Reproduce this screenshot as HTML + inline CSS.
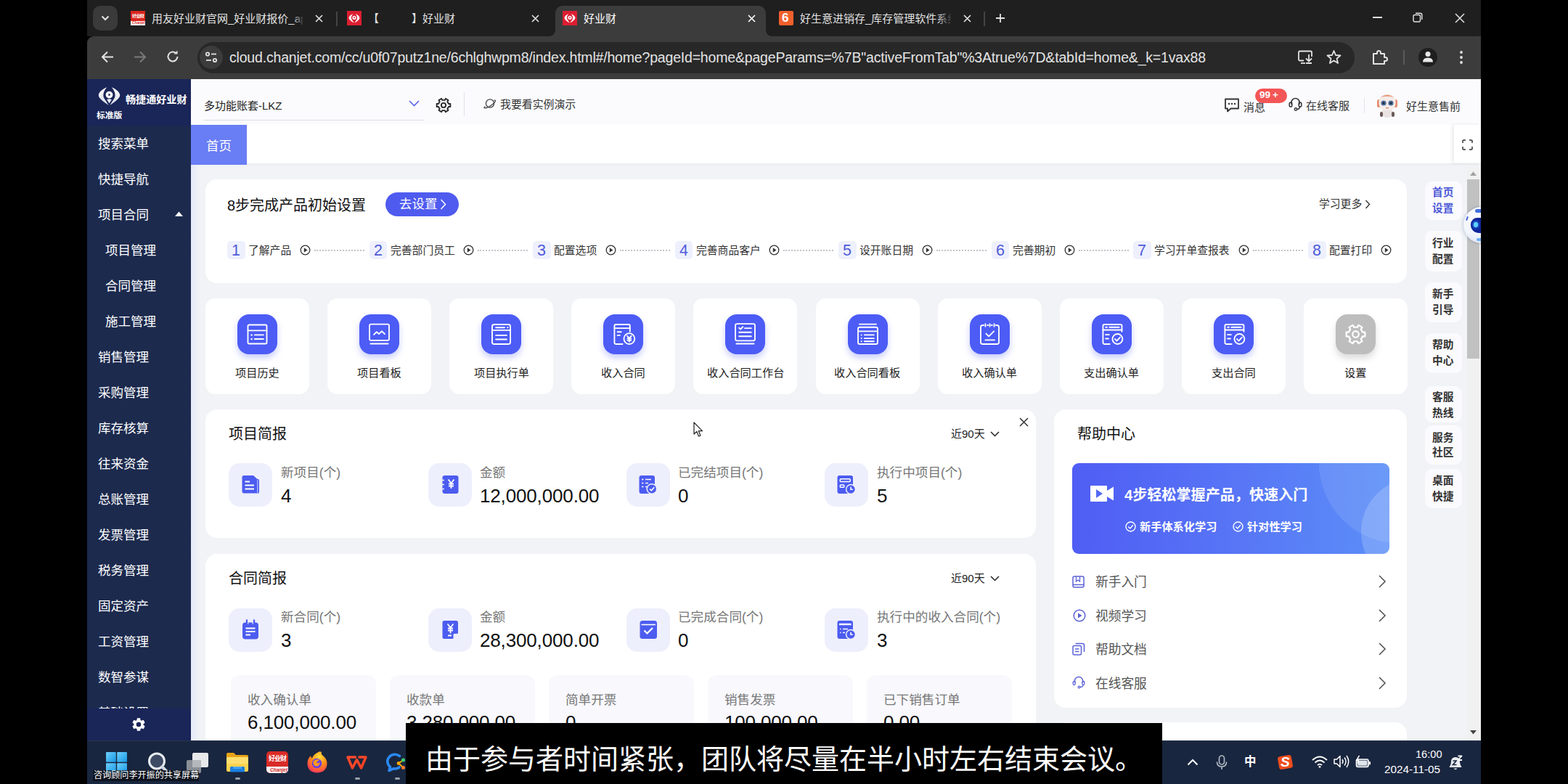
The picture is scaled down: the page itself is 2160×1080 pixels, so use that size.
<!DOCTYPE html>
<html lang="zh">
<head>
<meta charset="utf-8">
<title>screen</title>
<style>
*{box-sizing:border-box;margin:0;padding:0}
html,body{width:2160px;height:1080px;overflow:hidden;background:#000}
body{font-family:"Liberation Sans",sans-serif;position:relative;color:#222}
.a{position:absolute;white-space:nowrap}
.t{position:absolute;white-space:nowrap;line-height:1.4;transform:translateY(-50%)}
svg{position:absolute;overflow:visible}
.g{font-family:"Liberation Sans","Noto Sans CJK SC",sans-serif;white-space:pre}
.b{font-weight:bold}
/* chrome */
#tabbar{left:120px;top:0;width:1920px;height:50px;background:#1f1f1f}
#addr{left:120px;top:50px;width:1920px;height:59px;background:#3c3c3c;border-radius:9px 0 0 0}
#pill{left:272px;top:58px;width:1594px;height:43px;border-radius:22px;background:#282828}
#atab{left:765px;top:8px;width:290px;height:42px;background:#3c3c3c;border-radius:10px 10px 0 0}
.tabt{color:#e3e3e3;font-size:15px}
/* app */
#app{left:120px;top:109px;width:1920px;height:911px;background:linear-gradient(90deg,#e4e9f8 143px,#f1f3f6 155px);overflow:hidden}
#side{left:120px;top:109px;width:143px;height:911px;background:#1c2a4e;overflow:hidden}
.mi{color:#fff;font-size:17.5px;left:15px;margin-top:1.5px}
.ms{color:#fff;font-size:17.5px;left:25px;margin-top:1.5px}
#hdr{left:263px;top:109px;width:1777px;height:63px;background:#fbfbfe}
#tabs{left:263px;top:172px;width:1777px;height:53px;background:#fff;box-shadow:0 2px 3px rgba(0,0,0,.03)}
.card{position:absolute;background:#fff;border-radius:16px}
.ic{position:absolute;width:55px;height:55px;border-radius:16px;background:#4c5cf5;box-shadow:0 5px 8px rgba(76,92,245,.30)}
.icl{font-size:15.2px;color:#222;transform:translate(-50%,-50%)}
.sb{position:absolute;width:60px;height:60px;border-radius:15px;background:#eeeffc}
.sl{font-size:17.6px;color:#777}
.sv{font-size:26px;color:#111;letter-spacing:-0.15px}
.fn{position:absolute;left:1963px;width:49px;background:#fbfbfe;border-radius:10px;font-size:15px;font-weight:bold;color:#333;text-align:center;line-height:22px}
#task{left:120px;top:1020px;width:1920px;height:60px;background:#19263f;border-top:1.5px solid #28364e}
#sub{left:559px;top:996px;width:1042px;height:84px;background:#000}
</style>
</head>
<body>
<!-- browser chrome -->
<div class="a" id="tabbar"></div>
<div class="a" id="addr"></div>
<div class="a" id="atab"></div>
<div class="a" id="pill"></div>

<!-- tab search btn -->
<div class="a" style="left:128px;top:8px;width:34px;height:34px;border-radius:10px;background:#3a3a3a"></div>
<svg style="left:139px;top:20px" width="12" height="10" viewBox="0 0 12 10"><path d="M1.5 2.5 L6 7 L10.5 2.5" fill="none" stroke="#e3e3e3" stroke-width="2"/></svg>
<!-- tab1 -->
<div class="a" style="left:180px;top:15px;width:20px;height:20px;background:#fff"></div>
<div class="a" style="left:180px;top:15px;width:20px;height:14px;background:#d9251d"></div>
<svg style="left:181.5px;top:17.5px" width="18.8" height="8.4"><text class="g b" x="0" y="6.3" font-size="6" letter-spacing="-0.6" fill="rgb(255, 255, 255)">好业财</text></svg>
<div class="t" style="left:182px;top:32px;font-size:4.800px;font-weight:bold;font-style:italic;color:#d9251d">Chanjet</div>
<svg style="left:209px;top:14.5px;overflow:hidden" width="208" height="21"><text class="g" x="0" y="16" font-size="15" fill="rgb(227, 227, 227)">用友好业财官网_好业财报价_ap</text></svg>
<div class="a" style="left:403px;top:10px;width:16px;height:30px;background:linear-gradient(90deg,rgba(31,31,31,0),#1f1f1f)"></div>
<svg style="left:434px;top:20px" width="11" height="11" viewBox="0 0 11 11"><path d="M1 1 L10 10 M10 1 L1 10" stroke="#e3e3e3" stroke-width="1.6"/></svg>
<div class="a" style="left:463px;top:16px;width:2px;height:20px;background:#444"></div>
<!-- tab2 -->
<div class="a" style="left:478px;top:15px;width:20px;height:20px;background:#dc1e32"></div>
<svg style="left:480px;top:17px" width="16" height="16" viewBox="0 0 16 16"><g transform="translate(0.2,1.5) scale(0.503)"><path d="M12.300 1.200 C5.500 4 .8 8.300 .8 12.200 C.8 16.500 8 21.500 14.600 26 C12.500 22 9.800 18.800 8.300 16 C6.200 12 7.800 6 12.300 1.200 Z" fill="#fff"/><path d="M18.700 1.200 C25.500 4 30.200 8.300 30.200 12.200 C30.200 16.500 23 21.500 16.400 26 C18.500 22 21.200 18.800 22.700 16 C24.800 12 23.200 6 18.700 1.200 Z" fill="#fff"/><circle cx="15.500" cy="11.600" r="5.200" fill="#fff"/><circle cx="15.500" cy="11.600" r="2" fill="#dc1e32"/></g></svg>
<svg style="left:506.5px;top:14.75px" width="17" height="21"><text class="g" x="0" y="15.75" font-size="15" fill="rgb(227, 227, 227)">【</text></svg>
<svg style="left:567px;top:14.75px" width="62" height="21"><text class="g" x="0" y="15.75" font-size="15" fill="rgb(227, 227, 227)">】好业财</text></svg>
<svg style="left:732px;top:20px" width="11" height="11" viewBox="0 0 11 11"><path d="M1 1 L10 10 M10 1 L1 10" stroke="#e3e3e3" stroke-width="1.6"/></svg>
<!-- active tab3 -->
<div class="a" style="left:757px;top:42px;width:8px;height:8px;background:radial-gradient(circle at 0 0,#1f1f1f 7.5px,#3c3c3c 8px)"></div>
<div class="a" style="left:1055px;top:42px;width:8px;height:8px;background:radial-gradient(circle at 100% 0,#1f1f1f 7.5px,#3c3c3c 8px)"></div>
<div class="a" style="left:775px;top:15px;width:20px;height:20px;background:#dc1e32"></div>
<svg style="left:777px;top:17px" width="16" height="16" viewBox="0 0 16 16"><g transform="translate(0.2,1.5) scale(0.503)"><path d="M12.300 1.200 C5.500 4 .8 8.300 .8 12.200 C.8 16.500 8 21.500 14.600 26 C12.500 22 9.800 18.800 8.300 16 C6.200 12 7.800 6 12.300 1.200 Z" fill="#fff"/><path d="M18.700 1.200 C25.500 4 30.200 8.300 30.200 12.200 C30.200 16.500 23 21.500 16.400 26 C18.500 22 21.200 18.800 22.700 16 C24.800 12 23.200 6 18.700 1.200 Z" fill="#fff"/><circle cx="15.500" cy="11.600" r="5.200" fill="#fff"/><circle cx="15.500" cy="11.600" r="2" fill="#dc1e32"/></g></svg>
<svg style="left:804px;top:14.75px" width="47" height="21"><text class="g" x="0" y="15.75" font-size="15" fill="rgb(255, 255, 255)">好业财</text></svg>
<svg style="left:1030px;top:20px" width="11" height="11" viewBox="0 0 11 11"><path d="M1 1 L10 10 M10 1 L1 10" stroke="#fff" stroke-width="1.6"/></svg>
<!-- tab4 -->
<div class="a" style="left:1073px;top:15px;width:20px;height:20px;background:#f2602c;border-radius:2px"></div>
<svg style="left:1077px;top:12.25px" width="11.44" height="23.8"><text class="g b" x="0" y="17.85" font-size="17" fill="rgb(255, 255, 255)">6</text></svg>
<svg style="left:1102px;top:14.5px;overflow:hidden" width="208" height="21"><text class="g" x="0" y="16" font-size="15" fill="rgb(227, 227, 227)">好生意进销存_库存管理软件系统</text></svg>
<div class="a" style="left:1290px;top:10px;width:22px;height:30px;background:linear-gradient(90deg,rgba(31,31,31,0),#1f1f1f)"></div>
<svg style="left:1327px;top:20px" width="11" height="11" viewBox="0 0 11 11"><path d="M1 1 L10 10 M10 1 L1 10" stroke="#e3e3e3" stroke-width="1.6"/></svg>
<div class="a" style="left:1355px;top:16px;width:2px;height:20px;background:#444"></div>
<svg style="left:1371px;top:18px" width="14" height="14" viewBox="0 0 14 14"><path d="M7 1 V13 M1 7 H13" stroke="#e3e3e3" stroke-width="1.8"/></svg>
<!-- window controls -->
<div class="a" style="left:1891px;top:23px;width:13px;height:1.5px;background:#e3e3e3"></div>
<svg style="left:1946px;top:17px" width="14" height="14" viewBox="0 0 14 14"><rect x="1" y="3.5" width="9.5" height="9.5" rx="2" fill="none" stroke="#e3e3e3" stroke-width="1.4"/><path d="M4 1.2 H10.5 Q12.8 1.2 12.8 3.5 V10" fill="none" stroke="#e3e3e3" stroke-width="1.4"/></svg>
<svg style="left:2004px;top:18px" width="14" height="14" viewBox="0 0 14 14"><path d="M1 1 L13 13 M13 1 L1 13" stroke="#e3e3e3" stroke-width="1.5"/></svg>
<!-- nav buttons -->
<svg style="left:139px;top:70px" width="18" height="17" viewBox="0 0 18 17"><path d="M9 1.5 L2 8.5 L9 15.5 M2 8.5 H17" fill="none" stroke="#e3e3e3" stroke-width="2"/></svg>
<svg style="left:184px;top:70px" width="18" height="17" viewBox="0 0 18 17"><path d="M9 1.5 L16 8.5 L9 15.5 M16 8.5 H1" fill="none" stroke="#7a7a7a" stroke-width="2"/></svg>
<svg style="left:229px;top:69px" width="18" height="18" viewBox="0 0 18 18"><path d="M15.5 9 A6.5 6.5 0 1 1 13.6 4.4" fill="none" stroke="#e3e3e3" stroke-width="2"/><path d="M10.5 5.5 H15.5 V0.5 Z" fill="#e3e3e3"/></svg>
<!-- site info icon -->
<div class="a" style="left:275px;top:63px;width:32px;height:32px;border-radius:16px;background:#3c3c3c"></div>
<svg style="left:282px;top:70px" width="18" height="18" viewBox="0 0 18 18"><circle cx="4" cy="4.5" r="2.2" fill="none" stroke="#e3e3e3" stroke-width="1.8"/><path d="M9 4.5 H16" stroke="#e3e3e3" stroke-width="1.8"/><circle cx="14" cy="13" r="2.2" fill="none" stroke="#e3e3e3" stroke-width="1.8"/><path d="M2 13 H9" stroke="#e3e3e3" stroke-width="1.8"/></svg>
<svg id="url" style="left:316px;top:64px" width="1350" height="30" viewBox="0 0 1350 30"><text x="0" y="21.800" font-family="Liberation Sans, sans-serif" font-size="19.500" fill="#e3e3e3" textLength="1345" lengthAdjust="spacing">cloud.chanjet.com/cc/u0f07putz1ne/6chlghwpm8/index.html#/home?pageId=home&amp;pageParams=%7B"activeFromTab"%3Atrue%7D&amp;tabId=home&amp;_k=1vax88</text></svg>
<!-- right icons -->
<svg style="left:1787px;top:69px" width="22" height="20" viewBox="0 0 22 20"><path d="M20 9 V3 Q20 1.5 18.5 1.5 H3.5 Q2 1.5 2 3 V13 Q2 14.5 3.5 14.5 H9" fill="none" stroke="#e3e3e3" stroke-width="1.8"/><path d="M5 18 H11" stroke="#e3e3e3" stroke-width="1.8"/><path d="M16 6 V15 M12 11.5 L16 15.5 L20 11.5 M12 18 H20" fill="none" stroke="#e3e3e3" stroke-width="1.8"/></svg>
<svg style="left:1827px;top:68px" width="21" height="21" viewBox="0 0 21 21"><path d="M10.5 2 L13 8 L19.5 8.5 L14.5 12.7 L16.1 19 L10.5 15.5 L4.9 19 L6.5 12.7 L1.5 8.5 L8 8 Z" fill="none" stroke="#e3e3e3" stroke-width="1.8" stroke-linejoin="round"/></svg>
<svg style="left:1889px;top:67px" width="24" height="24" viewBox="0 0 24 24"><path d="M3 7 H8 V5.5 A2.5 2.5 0 0 1 13 5.5 V7 H18 V12 H19.5 A2.5 2.5 0 0 1 19.5 17 H18 V21 H3 Z" fill="none" stroke="#e3e3e3" stroke-width="2" stroke-linejoin="round"/></svg>
<div class="a" style="left:1933px;top:69px;width:1.5px;height:20px;background:#5a5a5a"></div>
<div class="a" style="left:1954px;top:66px;width:26px;height:26px;border-radius:13px;background:#1f1f1f"></div>
<svg style="left:1959px;top:70px" width="16" height="17" viewBox="0 0 16 17"><circle cx="8" cy="4.5" r="3.5" fill="#e8e8e8"/><path d="M1 15.5 Q1 9.5 8 9.5 Q15 9.5 15 15.5 Z" fill="#e8e8e8"/></svg>
<svg style="left:2010px;top:69px" width="6" height="20" viewBox="0 0 6 20"><circle cx="3" cy="3" r="1.9" fill="#e3e3e3"/><circle cx="3" cy="10" r="1.9" fill="#e3e3e3"/><circle cx="3" cy="17" r="1.9" fill="#e3e3e3"/></svg>
<!-- app -->
<div class="a" id="app"></div>
<div class="a" id="hdr"></div>
<div class="a" id="tabs"></div>
<div class="a" id="side">
<div class="a" style="left:0;top:0;width:143px;height:64px;background:#1a2558"></div>
<svg style="left:15px;top:10px" width="31" height="27" viewBox="0 0 31 27"><defs><linearGradient id="lg" x1="0" y1="0" x2="0" y2="1"><stop offset="0" stop-color="#fff"/><stop offset="1" stop-color="#d5dae6"/></linearGradient></defs><path d="M12.300 1.200 C5.500 4 .8 8.300 .8 12.200 C.8 16.500 8 21.500 14.600 26 C12.500 22 9.800 18.800 8.300 16 C6.200 12 7.800 6 12.300 1.200 Z" fill="url(#lg)"/><path d="M18.700 1.200 C25.500 4 30.200 8.300 30.200 12.200 C30.200 16.500 23 21.500 16.400 26 C18.500 22 21.200 18.800 22.700 16 C24.800 12 23.200 6 18.700 1.200 Z" fill="url(#lg)"/><circle cx="15.500" cy="11.600" r="4.900" fill="#fff"/><circle cx="15.500" cy="11.600" r="1.500" fill="#39446f"/><path d="M12.200 18.200 Q15.500 16.200 18.800 18.200 L15.500 23.500 Z" fill="#e3e7ef"/></svg>
<svg style="left:52.5px;top:17.52px" width="86.6" height="19.74"><text class="g b" x="0" y="14.8" font-size="14.1" fill="rgb(255, 255, 255)">畅捷通好业财</text></svg>
<svg style="left:12.8px;top:41.85px" width="37.4" height="16.52"><text class="g b" x="0" y="12.39" font-size="11.8" fill="rgb(255, 255, 255)">标准版</text></svg>
<svg style="left:15px;top:76.88px" width="72" height="24.5"><text class="g" x="0" y="18.38" font-size="17.5" fill="rgb(255, 255, 255)">搜索菜单</text></svg>
<svg style="left:15px;top:125.88px" width="72" height="24.5"><text class="g" x="0" y="18.38" font-size="17.5" fill="rgb(255, 255, 255)">快捷导航</text></svg>
<svg style="left:15px;top:174.88px" width="72" height="24.5"><text class="g" x="0" y="18.38" font-size="17.5" fill="rgb(255, 255, 255)">项目合同</text></svg>
<svg style="left:25px;top:223.88px" width="72" height="24.5"><text class="g" x="0" y="18.38" font-size="17.5" fill="rgb(255, 255, 255)">项目管理</text></svg>
<svg style="left:25px;top:272.88px" width="72" height="24.5"><text class="g" x="0" y="18.38" font-size="17.5" fill="rgb(255, 255, 255)">合同管理</text></svg>
<svg style="left:25px;top:321.88px" width="72" height="24.5"><text class="g" x="0" y="18.38" font-size="17.5" fill="rgb(255, 255, 255)">施工管理</text></svg>
<svg style="left:15px;top:370.88px" width="72" height="24.5"><text class="g" x="0" y="18.38" font-size="17.5" fill="rgb(255, 255, 255)">销售管理</text></svg>
<svg style="left:15px;top:419.88px" width="72" height="24.5"><text class="g" x="0" y="18.38" font-size="17.5" fill="rgb(255, 255, 255)">采购管理</text></svg>
<svg style="left:15px;top:468.88px" width="72" height="24.5"><text class="g" x="0" y="18.38" font-size="17.5" fill="rgb(255, 255, 255)">库存核算</text></svg>
<svg style="left:15px;top:517.88px" width="72" height="24.5"><text class="g" x="0" y="18.38" font-size="17.5" fill="rgb(255, 255, 255)">往来资金</text></svg>
<svg style="left:15px;top:566.88px" width="72" height="24.5"><text class="g" x="0" y="18.38" font-size="17.5" fill="rgb(255, 255, 255)">总账管理</text></svg>
<svg style="left:15px;top:615.88px" width="72" height="24.5"><text class="g" x="0" y="18.38" font-size="17.5" fill="rgb(255, 255, 255)">发票管理</text></svg>
<svg style="left:15px;top:664.88px" width="72" height="24.5"><text class="g" x="0" y="18.38" font-size="17.5" fill="rgb(255, 255, 255)">税务管理</text></svg>
<svg style="left:15px;top:713.88px" width="72" height="24.5"><text class="g" x="0" y="18.38" font-size="17.5" fill="rgb(255, 255, 255)">固定资产</text></svg>
<svg style="left:15px;top:762.88px" width="72" height="24.5"><text class="g" x="0" y="18.38" font-size="17.5" fill="rgb(255, 255, 255)">工资管理</text></svg>
<svg style="left:15px;top:811.88px" width="72" height="24.5"><text class="g" x="0" y="18.38" font-size="17.5" fill="rgb(255, 255, 255)">数智参谋</text></svg>
<svg style="left:15px;top:860.88px" width="72" height="24.5"><text class="g" x="0" y="18.38" font-size="17.5" fill="rgb(255, 255, 255)">基础设置</text></svg>
<svg style="left:121px;top:182px" width="11" height="7" viewBox="0 0 11 7"><path d="M0 7 L5.5 0.5 L11 7 Z" fill="#fff"/></svg>
<div class="a" style="left:0;top:867px;width:143px;height:44px;background:#1a2558"></div>
<svg style="left:60px;top:878px" width="22" height="22" viewBox="0 0 24 24"><path fill="#fff" d="M19.14 12.94a7.07 7.07 0 0 0 .05-.94 7.07 7.07 0 0 0-.06-.94l2.03-1.58a.49.49 0 0 0 .12-.61l-1.92-3.32a.49.49 0 0 0-.59-.22l-2.39.96a7.03 7.03 0 0 0-1.62-.94l-.36-2.54a.48.48 0 0 0-.48-.41h-3.84a.48.48 0 0 0-.47.41l-.36 2.54a7.4 7.4 0 0 0-1.62.94l-2.39-.96a.48.48 0 0 0-.59.22L2.74 8.87a.47.47 0 0 0 .12.61l2.03 1.58a7.34 7.34 0 0 0 0 1.88l-2.03 1.58a.49.49 0 0 0-.12.61l1.92 3.32c.12.22.37.29.59.22l2.39-.96c.5.38 1.03.7 1.62.94l.36 2.54c.05.24.24.41.48.41h3.84c.24 0 .44-.17.47-.41l.36-2.54a7.03 7.03 0 0 0 1.62-.94l2.39.96c.22.08.47 0 .59-.22l1.92-3.32a.49.49 0 0 0-.12-.61zM12 15.6a3.6 3.6 0 1 1 0-7.2 3.6 3.6 0 0 1 0 7.2z"/></svg>
</div>
<!-- header -->
<svg style="left:281px;top:134.75px" width="109.08" height="21"><text class="g" x="0" y="15.75" font-size="15" fill="rgb(34, 34, 34)">多功能账套-LKZ</text></svg>
<div class="a" style="left:280px;top:164.5px;width:304px;height:1px;background:#dcdce4"></div>
<svg style="left:563px;top:138px" width="15" height="9" viewBox="0 0 15 9"><path d="M1 1 L7.5 7.5 L14 1" fill="none" stroke="#5b63e6" stroke-width="1.6"/></svg>
<svg style="left:600px;top:134px" width="22" height="22" viewBox="0 0 22 22"><path d="M13.81 1.82 L17.55 3.98 L16.28 5.96 L18.00 8.95 L20.35 8.84 L20.35 13.16 L18.00 13.05 L16.28 16.04 L17.55 18.02 L13.81 20.18 L12.72 18.09 L9.28 18.09 L8.19 20.18 L4.45 18.02 L5.72 16.04 L4.00 13.05 L1.65 13.16 L1.65 8.84 L4.00 8.95 L5.72 5.96 L4.45 3.98 L8.19 1.82 L9.28 3.91 L12.72 3.91 Z" fill="none" stroke="#2a2a2a" stroke-width="1.900" stroke-linejoin="round"/><circle cx="11" cy="11" r="3.100" fill="none" stroke="#2a2a2a" stroke-width="1.900"/></svg>
<div class="a" style="left:638.5px;top:127px;width:1px;height:33px;background:#e2e2e8"></div>
<svg style="left:665px;top:135px" width="20" height="16" viewBox="0 0 20 16"><circle cx="10" cy="7.5" r="5.6" fill="none" stroke="#444" stroke-width="1.3"/><path d="M3.5 11.5 Q0 14.5 4 13.8 Q10 12.5 16.5 6 Q19 2.5 15.5 3.2" fill="none" stroke="#444" stroke-width="1.2"/></svg>
<svg style="left:689px;top:133.43px" width="106.3" height="20.86"><text class="g" x="0" y="15.65" font-size="14.9" fill="rgb(51, 51, 51)">我要看实例演示</text></svg>
<!-- header right -->
<svg style="left:1686px;top:134px" width="22" height="22" viewBox="0 0 22 22"><path d="M2 2.5 H20 V15.5 H9.5 L5 19.5 V15.5 H2 Z" fill="none" stroke="#333" stroke-width="1.8" stroke-linejoin="round"/><circle cx="7" cy="9" r="1.2" fill="#333"/><circle cx="11" cy="9" r="1.2" fill="#333"/><circle cx="15" cy="9" r="1.2" fill="#333"/></svg>
<svg style="left:1713px;top:136.75px" width="32" height="21"><text class="g" x="0" y="15.75" font-size="15" fill="rgb(51, 51, 51)">消息</text></svg>
<div class="a" style="left:1729px;top:122px;width:44px;height:20px;border-radius:10px;background:#f35656"></div>
<svg style="left:1735px;top:121.38px" width="27.5" height="18.9"><text class="g b" x="0" y="14.18" font-size="13.5" fill="rgb(255, 255, 255)">99<tspan dx="3">+</tspan></text></svg>
<svg style="left:1775px;top:133px" width="19" height="20" viewBox="0 0 19 20"><path d="M4 11 V8 A5.5 5.5 0 0 1 15 8 V11" fill="none" stroke="#333" stroke-width="1.6"/><rect x="1.2" y="8" width="3.6" height="6" rx="1.8" fill="none" stroke="#333" stroke-width="1.5"/><rect x="14.200" y="8" width="3.600" height="6" rx="1.800" fill="none" stroke="#333" stroke-width="1.500"/><path d="M15.500 14 Q15.500 17.500 11.500 17.500" fill="none" stroke="#333" stroke-width="1.500"/><circle cx="10" cy="17.500" r="1.700" fill="none" stroke="#333" stroke-width="1.400"/></svg>
<svg style="left:1799px;top:134.75px" width="62" height="21"><text class="g" x="0" y="15.75" font-size="15" fill="rgb(51, 51, 51)">在线客服</text></svg>
<div class="a" style="left:1878.5px;top:135px;width:1px;height:21px;background:#e2e2e8"></div>
<!-- robot avatar -->
<svg style="left:1895px;top:128px" width="32" height="34" viewBox="0 0 32 34"><ellipse cx="16" cy="28" rx="9" ry="6" fill="#e9e3e1"/><rect x="6" y="26" width="4" height="7" rx="2" fill="#6b5a58"/><rect x="22" y="26" width="4" height="7" rx="2" fill="#6b5a58"/><rect x="2" y="9" width="5" height="11" rx="2.500" fill="#e58b6c"/><rect x="25" y="9" width="5" height="11" rx="2.500" fill="#e58b6c"/><rect x="4.500" y="2" width="23" height="22" rx="9" fill="#f4ece8"/><path d="M7 6 Q16 -1 25 6 Q16 3.500 7 6Z" fill="#e9977a"/><circle cx="11" cy="14" r="3.600" fill="#4f6f9c"/><circle cx="21" cy="14" r="3.600" fill="#4f6f9c"/><circle cx="11" cy="14" r="1.600" fill="#1c2538"/><circle cx="21" cy="14" r="1.600" fill="#1c2538"/><path d="M14 20.500 Q16 21.500 18 20.500" stroke="#c96d5a" stroke-width="1" fill="none"/></svg>
<svg style="left:1937px;top:135.75px" width="77" height="21"><text class="g" x="0" y="15.75" font-size="15" fill="rgb(51, 51, 51)">好生意售前</text></svg>
<!-- tabs -->
<div class="a" style="left:263px;top:172px;width:77px;height:55px;background:#697df5"></div>
<svg style="left:284px;top:188.88px" width="37" height="24.5"><text class="g" x="0" y="18.38" font-size="17.5" fill="rgb(255, 255, 255)">首页</text></svg>
<div class="a" style="left:2003px;top:172px;width:37px;height:52px;background:#fff;box-shadow:-3px 0 5px rgba(0,0,0,.08)"></div>
<svg style="left:2014px;top:192px" width="15" height="15" viewBox="0 0 15 15"><path d="M1 5 V2 Q1 1 2 1 H5 M10 1 H13 Q14 1 14 2 V5 M14 10 V13 Q14 14 13 14 H10 M5 14 H2 Q1 14 1 13 V10" fill="none" stroke="#333" stroke-width="1.5"/></svg>
<div id="content">
<div class="card" style="left:283px;top:247px;width:1655px;height:143px"></div>
<svg style="left:313px;top:268.5px" width="193.1" height="28"><text class="g" x="0" y="21" font-size="20" fill="rgb(17, 17, 17)">8步完成产品初始设置</text></svg>
<div class="a" style="left:531px;top:265px;width:101px;height:33px;border-radius:17px;background:#4f5bef"></div>
<svg style="left:550px;top:268.88px" width="54.5" height="24.5"><text class="g" x="0" y="18.38" font-size="17.5" fill="rgb(255, 255, 255)">去设置</text></svg>
<svg style="left:606px;top:274px" width="9" height="15" viewBox="0 0 9 15"><path d="M1.5 1 L7.5 7.5 L1.5 14" fill="none" stroke="#fff" stroke-width="1.5"/></svg>
<svg style="left:1817px;top:270.11px" width="61.2" height="20.72"><text class="g" x="0" y="15.54" font-size="14.8" fill="rgb(51, 51, 51)">学习更多</text></svg>
<svg style="left:1880px;top:275px" width="8" height="13" viewBox="0 0 8 13"><path d="M1.5 1 L6.5 6.5 L1.5 12" fill="none" stroke="#333" stroke-width="1.4"/></svg>
<div class="a" style="left:313px;top:332px;width:24.5px;height:24.5px;border-radius:5px;background:#eef0fd"></div>
<svg style="left:319.28px;top:329.38px" width="13.93" height="30.1"><text class="g" x="0" y="22.57" font-size="21.5" fill="rgb(79, 91, 216)">1</text></svg>
<svg style="left:342px;top:333.61px" width="61.2" height="20.72"><text class="g" x="0" y="15.54" font-size="14.8" fill="rgb(51, 51, 51)">了解产品</text></svg>
<svg style="left:413.2px;top:337px" width="15" height="15" viewBox="0 0 15 15"><circle cx="7.5" cy="7.5" r="6.3" fill="none" stroke="#333" stroke-width="1.3"/><path d="M5.8 4.300 L10.500 7.500 L5.800 10.700 Z" fill="#333"/></svg>
<div class="a" style="left:433.2px;top:343.5px;width:69px;height:0;border-top:2px dotted #c4c4cc"></div>
<div class="a" style="left:508.5px;top:332px;width:24.5px;height:24.5px;border-radius:5px;background:#eef0fd"></div>
<svg style="left:514.78px;top:329.38px" width="13.93" height="30.1"><text class="g" x="0" y="22.57" font-size="21.5" fill="rgb(79, 91, 216)">2</text></svg>
<svg style="left:537.5px;top:333.61px" width="90.8" height="20.72"><text class="g" x="0" y="15.54" font-size="14.8" fill="rgb(51, 51, 51)">完善部门员工</text></svg>
<svg style="left:638.3px;top:337px" width="15" height="15" viewBox="0 0 15 15"><circle cx="7.5" cy="7.5" r="6.3" fill="none" stroke="#333" stroke-width="1.3"/><path d="M5.8 4.300 L10.500 7.500 L5.800 10.700 Z" fill="#333"/></svg>
<div class="a" style="left:658.3px;top:343.5px;width:69px;height:0;border-top:2px dotted #c4c4cc"></div>
<div class="a" style="left:734px;top:332px;width:24.5px;height:24.5px;border-radius:5px;background:#eef0fd"></div>
<svg style="left:740.28px;top:329.38px" width="13.93" height="30.1"><text class="g" x="0" y="22.57" font-size="21.5" fill="rgb(79, 91, 216)">3</text></svg>
<svg style="left:763px;top:333.61px" width="61.2" height="20.72"><text class="g" x="0" y="15.54" font-size="14.8" fill="rgb(51, 51, 51)">配置选项</text></svg>
<svg style="left:834.2px;top:337px" width="15" height="15" viewBox="0 0 15 15"><circle cx="7.5" cy="7.5" r="6.3" fill="none" stroke="#333" stroke-width="1.3"/><path d="M5.8 4.300 L10.500 7.500 L5.800 10.700 Z" fill="#333"/></svg>
<div class="a" style="left:854.2px;top:343.5px;width:69px;height:0;border-top:2px dotted #c4c4cc"></div>
<div class="a" style="left:929.5px;top:332px;width:24.5px;height:24.5px;border-radius:5px;background:#eef0fd"></div>
<svg style="left:935.78px;top:329.38px" width="13.93" height="30.1"><text class="g" x="0" y="22.57" font-size="21.5" fill="rgb(79, 91, 216)">4</text></svg>
<svg style="left:958.5px;top:333.61px" width="90.8" height="20.72"><text class="g" x="0" y="15.54" font-size="14.8" fill="rgb(51, 51, 51)">完善商品客户</text></svg>
<svg style="left:1059.3px;top:337px" width="15" height="15" viewBox="0 0 15 15"><circle cx="7.5" cy="7.5" r="6.3" fill="none" stroke="#333" stroke-width="1.3"/><path d="M5.8 4.300 L10.500 7.500 L5.800 10.700 Z" fill="#333"/></svg>
<div class="a" style="left:1079.3px;top:343.5px;width:69px;height:0;border-top:2px dotted #c4c4cc"></div>
<div class="a" style="left:1155px;top:332px;width:24.5px;height:24.5px;border-radius:5px;background:#eef0fd"></div>
<svg style="left:1161.28px;top:329.38px" width="13.93" height="30.1"><text class="g" x="0" y="22.57" font-size="21.5" fill="rgb(79, 91, 216)">5</text></svg>
<svg style="left:1184px;top:333.61px" width="76" height="20.72"><text class="g" x="0" y="15.54" font-size="14.8" fill="rgb(51, 51, 51)">设开账日期</text></svg>
<svg style="left:1270px;top:337px" width="15" height="15" viewBox="0 0 15 15"><circle cx="7.5" cy="7.5" r="6.3" fill="none" stroke="#333" stroke-width="1.3"/><path d="M5.8 4.300 L10.500 7.500 L5.800 10.700 Z" fill="#333"/></svg>
<div class="a" style="left:1290px;top:343.5px;width:69px;height:0;border-top:2px dotted #c4c4cc"></div>
<div class="a" style="left:1365.5px;top:332px;width:24.5px;height:24.5px;border-radius:5px;background:#eef0fd"></div>
<svg style="left:1371.78px;top:329.38px" width="13.93" height="30.1"><text class="g" x="0" y="22.57" font-size="21.5" fill="rgb(79, 91, 216)">6</text></svg>
<svg style="left:1394.5px;top:333.61px" width="61.2" height="20.72"><text class="g" x="0" y="15.54" font-size="14.8" fill="rgb(51, 51, 51)">完善期初</text></svg>
<svg style="left:1465.7px;top:337px" width="15" height="15" viewBox="0 0 15 15"><circle cx="7.5" cy="7.5" r="6.3" fill="none" stroke="#333" stroke-width="1.3"/><path d="M5.8 4.300 L10.500 7.500 L5.800 10.700 Z" fill="#333"/></svg>
<div class="a" style="left:1485.7px;top:343.5px;width:69px;height:0;border-top:2px dotted #c4c4cc"></div>
<div class="a" style="left:1561px;top:332px;width:24.5px;height:24.5px;border-radius:5px;background:#eef0fd"></div>
<svg style="left:1567.28px;top:329.38px" width="13.93" height="30.1"><text class="g" x="0" y="22.57" font-size="21.5" fill="rgb(79, 91, 216)">7</text></svg>
<svg style="left:1590px;top:333.61px" width="105.6" height="20.72"><text class="g" x="0" y="15.54" font-size="14.8" fill="rgb(51, 51, 51)">学习开单查报表</text></svg>
<svg style="left:1705.6px;top:337px" width="15" height="15" viewBox="0 0 15 15"><circle cx="7.5" cy="7.5" r="6.3" fill="none" stroke="#333" stroke-width="1.3"/><path d="M5.8 4.300 L10.500 7.500 L5.800 10.700 Z" fill="#333"/></svg>
<div class="a" style="left:1725.6px;top:343.5px;width:69px;height:0;border-top:2px dotted #c4c4cc"></div>
<div class="a" style="left:1802px;top:332px;width:24.5px;height:24.5px;border-radius:5px;background:#eef0fd"></div>
<svg style="left:1808.28px;top:329.38px" width="13.93" height="30.1"><text class="g" x="0" y="22.57" font-size="21.5" fill="rgb(79, 91, 216)">8</text></svg>
<svg style="left:1831px;top:333.61px" width="61.2" height="20.72"><text class="g" x="0" y="15.54" font-size="14.8" fill="rgb(51, 51, 51)">配置打印</text></svg>
<svg style="left:1902.2px;top:337px" width="15" height="15" viewBox="0 0 15 15"><circle cx="7.5" cy="7.5" r="6.3" fill="none" stroke="#333" stroke-width="1.3"/><path d="M5.8 4.300 L10.500 7.500 L5.800 10.700 Z" fill="#333"/></svg>
<div class="card" style="left:283px;top:411px;width:143px;height:132px;border-radius:14px"></div>
<div class="ic" id="ic0" style="left:327px;top:433px"><svg style="left:0;top:0" width="55" height="55" viewBox="-1.6 -1.6 59.200 59.200"><rect x="14" y="14" width="28" height="28" rx="2" fill="none" stroke="#fff" stroke-width="2" stroke-linecap="round" stroke-linejoin="round"/><path d="M14 22.5 H42 M24 29 H37 M24 35 H37" fill="none" stroke="#fff" stroke-width="2" stroke-linecap="round" stroke-linejoin="round"/><circle cx="19.500" cy="29" r="1.300" fill="#fff"/><circle cx="19.500" cy="35" r="1.300" fill="#fff"/></svg></div>
<svg style="left:324.1px;top:502.9px" width="62.8" height="21.28"><text class="g" x="0" y="15.96" font-size="15.2" fill="rgb(34, 34, 34)">项目历史</text></svg>
<div class="card" style="left:451.1px;top:411px;width:143px;height:132px;border-radius:14px"></div>
<div class="ic" id="ic1" style="left:495.1px;top:433px"><svg style="left:0;top:0" width="55" height="55" viewBox="-1.6 -1.6 59.200 59.200"><rect x="13.500" y="13" width="29" height="24" rx="2" fill="none" stroke="#fff" stroke-width="2" stroke-linecap="round" stroke-linejoin="round"/><path d="M20 28.500 L24 24.500 L27.500 27.500 L31.500 23.500 L36 27.500" fill="none" stroke="#fff" stroke-width="2" stroke-linecap="round" stroke-linejoin="round" stroke-width="1.800"/><path d="M15 42 H41" fill="none" stroke="#fff" stroke-width="2" stroke-linecap="round" stroke-linejoin="round"/></svg></div>
<svg style="left:492.19px;top:502.9px" width="62.8" height="21.28"><text class="g" x="0" y="15.96" font-size="15.2" fill="rgb(34, 34, 34)">项目看板</text></svg>
<div class="card" style="left:619.2px;top:411px;width:143px;height:132px;border-radius:14px"></div>
<div class="ic" id="ic2" style="left:663.2px;top:433px"><svg style="left:0;top:0" width="55" height="55" viewBox="-1.6 -1.6 59.200 59.200"><rect x="14.500" y="13.500" width="27" height="29" rx="3" fill="none" stroke="#fff" stroke-width="2" stroke-linecap="round" stroke-linejoin="round"/><path d="M14.500 22 H41.500 M20 18 H33 M20 29.500 H36 M20 35.500 H36" fill="none" stroke="#fff" stroke-width="2" stroke-linecap="round" stroke-linejoin="round"/><circle cx="37.500" cy="18" r="1.200" fill="#fff"/></svg></div>
<svg style="left:652.69px;top:502.9px" width="78" height="21.28"><text class="g" x="0" y="15.96" font-size="15.2" fill="rgb(34, 34, 34)">项目执行单</text></svg>
<div class="card" style="left:787.3px;top:411px;width:143px;height:132px;border-radius:14px"></div>
<div class="ic" id="ic3" style="left:831.3px;top:433px"><svg style="left:0;top:0" width="55" height="55" viewBox="-1.6 -1.6 59.200 59.200"><path d="M27 42.500 H17 Q15 42.500 15 40.500 V15.500 Q15 13.500 17 13.500 H36 Q38 13.500 38 15.500 V24" fill="none" stroke="#fff" stroke-width="2" stroke-linecap="round" stroke-linejoin="round"/><path d="M15 19 H38 M19.500 24.500 H25 M19.500 29.500 H23" fill="none" stroke="#fff" stroke-width="2" stroke-linecap="round" stroke-linejoin="round" stroke-width="1.800"/><circle cx="37" cy="34.500" r="8" fill="#4c5cf5" stroke="#fff" stroke-width="2"/><path d="M34 30.500 L37 34 L40 30.500 M37 34 V39 M34.300 34.500 H39.700 M34.300 37 H39.700" fill="none" stroke="#fff" stroke-width="2" stroke-linecap="round" stroke-linejoin="round" stroke-width="1.500"/></svg></div>
<svg style="left:828.4px;top:502.9px" width="62.8" height="21.28"><text class="g" x="0" y="15.96" font-size="15.2" fill="rgb(34, 34, 34)">收入合同</text></svg>
<div class="card" style="left:955.4px;top:411px;width:143px;height:132px;border-radius:14px"></div>
<div class="ic" id="ic4" style="left:999.4px;top:433px"><svg style="left:0;top:0" width="55" height="55" viewBox="-1.6 -1.6 59.200 59.200"><rect x="13.500" y="12.500" width="29" height="25" rx="2.500" fill="none" stroke="#fff" stroke-width="2" stroke-linecap="round" stroke-linejoin="round"/><path d="M19 18.500 L21 20.500 L24.500 17 M27.500 19 H37 M19 25 H37 M19 31 H37 M15 42 H41" fill="none" stroke="#fff" stroke-width="2" stroke-linecap="round" stroke-linejoin="round" stroke-width="1.900"/></svg></div>
<svg style="left:973.69px;top:502.9px" width="108.4" height="21.28"><text class="g" x="0" y="15.96" font-size="15.2" fill="rgb(34, 34, 34)">收入合同工作台</text></svg>
<div class="card" style="left:1123.5px;top:411px;width:143px;height:132px;border-radius:14px"></div>
<div class="ic" id="ic5" style="left:1167.5px;top:433px"><svg style="left:0;top:0" width="55" height="55" viewBox="-1.6 -1.6 59.200 59.200"><path d="M15.500 13 H40.500" fill="none" stroke="#fff" stroke-width="2" stroke-linecap="round" stroke-linejoin="round"/><rect x="13.500" y="17.500" width="29" height="25" rx="2.500" fill="none" stroke="#fff" stroke-width="2" stroke-linecap="round" stroke-linejoin="round"/><path d="M13.500 23.500 H42.500 M23 29 H37 M23 34 H37 M23 38.500 H37" fill="none" stroke="#fff" stroke-width="2" stroke-linecap="round" stroke-linejoin="round" stroke-width="1.800"/><circle cx="18.500" cy="29" r="1.100" fill="#fff"/><circle cx="18.500" cy="34" r="1.100" fill="#fff"/><circle cx="18.500" cy="38.500" r="1.100" fill="#fff"/></svg></div>
<svg style="left:1149.4px;top:502.9px" width="93.2" height="21.28"><text class="g" x="0" y="15.96" font-size="15.2" fill="rgb(34, 34, 34)">收入合同看板</text></svg>
<div class="card" style="left:1291.6px;top:411px;width:143px;height:132px;border-radius:14px"></div>
<div class="ic" id="ic6" style="left:1335.6px;top:433px"><svg style="left:0;top:0" width="55" height="55" viewBox="-1.6 -1.6 59.200 59.200"><path d="M19 14.500 H17.500 Q14.500 14.500 14.500 17.500 V39.500 Q14.500 42.500 17.500 42.500 H38.500 Q41.500 42.500 41.500 39.500 V17.500 Q41.500 14.500 38.500 14.500 H37" fill="none" stroke="#fff" stroke-width="2" stroke-linecap="round" stroke-linejoin="round"/><path d="M21.500 12.500 V16.500 M28 12.500 V16.500 M34.500 12.500 V16.500 M24.500 14.500 H25.500 M30.500 14.500 H31.500" fill="none" stroke="#fff" stroke-width="2" stroke-linecap="round" stroke-linejoin="round"/><path d="M22.500 27 L26.500 31 L34 23.500 M21.500 36.500 H35" fill="none" stroke="#fff" stroke-width="2" stroke-linecap="round" stroke-linejoin="round"/></svg></div>
<svg style="left:1325.09px;top:502.9px" width="78" height="21.28"><text class="g" x="0" y="15.96" font-size="15.2" fill="rgb(34, 34, 34)">收入确认单</text></svg>
<div class="card" style="left:1459.7px;top:411px;width:143px;height:132px;border-radius:14px"></div>
<div class="ic" id="ic7" style="left:1503.7px;top:433px"><svg style="left:0;top:0" width="55" height="55" viewBox="-1.6 -1.6 59.200 59.200"><path d="M25 42.500 H17 Q15 42.500 15 40.500 V15.500 Q15 13.500 17 13.500 H41 Q43 13.500 43 15.500 V24" fill="none" stroke="#fff" stroke-width="2" stroke-linecap="round" stroke-linejoin="round"/><path d="M15 21.500 H43 M19 17.500 H21 M24.500 17.500 H39 M19 28.500 H24 M19 34.500 H23" fill="none" stroke="#fff" stroke-width="2" stroke-linecap="round" stroke-linejoin="round" stroke-width="1.800"/><circle cx="36.500" cy="35" r="7.500" fill="none" stroke="#fff" stroke-width="2" stroke-linecap="round" stroke-linejoin="round"/><path d="M32.800 35 L35.500 37.800 L40.300 32.500" fill="none" stroke="#fff" stroke-width="2" stroke-linecap="round" stroke-linejoin="round"/></svg></div>
<svg style="left:1493.19px;top:502.9px" width="78" height="21.28"><text class="g" x="0" y="15.96" font-size="15.2" fill="rgb(34, 34, 34)">支出确认单</text></svg>
<div class="card" style="left:1627.8px;top:411px;width:143px;height:132px;border-radius:14px"></div>
<div class="ic" id="ic8" style="left:1671.8px;top:433px"><svg style="left:0;top:0" width="55" height="55" viewBox="-1.6 -1.6 59.200 59.200"><path d="M25 42.500 H17 Q15 42.500 15 40.500 V15.500 Q15 13.500 17 13.500 H41 Q43 13.500 43 15.500 V24" fill="none" stroke="#fff" stroke-width="2" stroke-linecap="round" stroke-linejoin="round"/><path d="M15 21.500 H43 M19 17.500 H21 M24.500 17.500 H39 M19 28.500 H24 M19 34.500 H23" fill="none" stroke="#fff" stroke-width="2" stroke-linecap="round" stroke-linejoin="round" stroke-width="1.800"/><circle cx="36.500" cy="35" r="7.500" fill="none" stroke="#fff" stroke-width="2" stroke-linecap="round" stroke-linejoin="round"/><path d="M32.800 35 L35.500 37.800 L40.300 32.500" fill="none" stroke="#fff" stroke-width="2" stroke-linecap="round" stroke-linejoin="round"/></svg></div>
<svg style="left:1668.9px;top:502.9px" width="62.8" height="21.28"><text class="g" x="0" y="15.96" font-size="15.2" fill="rgb(34, 34, 34)">支出合同</text></svg>
<div class="card" style="left:1795.9px;top:411px;width:143px;height:132px;border-radius:14px"></div>
<div class="ic" id="ic9" style="left:1839.9px;top:433px;background:#bdbdbd;box-shadow:0 6px 8px rgba(120,120,120,.25)"><svg style="left:0;top:0" width="55" height="55" viewBox="-1.6 -1.6 59.200 59.200"><path d="M32.15 14.42 L37.68 17.61 L35.81 20.55 L38.36 24.96 L41.84 24.81 L41.84 31.19 L38.36 31.04 L35.81 35.45 L37.68 38.39 L32.15 41.58 L30.55 38.49 L25.45 38.49 L23.85 41.58 L18.32 38.39 L20.19 35.45 L17.64 31.04 L14.16 31.19 L14.16 24.81 L17.64 24.96 L20.19 20.55 L18.32 17.61 L23.85 14.42 L25.45 17.51 L30.55 17.51 Z" fill="none" stroke="#fff" stroke-width="2.400" stroke-linejoin="round"/><circle cx="28" cy="28" r="4.600" fill="none" stroke="#fff" stroke-width="2.400"/></svg></div>
<svg style="left:1852.19px;top:502.9px" width="32.4" height="21.28"><text class="g" x="0" y="15.96" font-size="15.2" fill="rgb(34, 34, 34)">设置</text></svg>
<div class="card" style="left:283px;top:564px;width:1144px;height:177px"></div>
<svg style="left:315px;top:584px" width="82" height="28"><text class="g" x="0" y="21" font-size="20" fill="rgb(17, 17, 17)">项目简报</text></svg>
<svg style="left:1310px;top:587.25px" width="48.65" height="21"><text class="g" x="0" y="15.75" font-size="15" fill="rgb(34, 34, 34)">近90天</text></svg>
<svg style="left:1364px;top:594px" width="13" height="8" viewBox="0 0 13 8"><path d="M1 1 L6.5 6.500 L12 1" fill="none" stroke="#222" stroke-width="1.500"/></svg>
<svg style="left:1404px;top:575px" width="13" height="13" viewBox="0 0 13 13"><path d="M1 1 L12 12 M12 1 L1 12" stroke="#333" stroke-width="1.500"/></svg>
<div class="sb" style="left:315px;top:638px"><svg style="left:0;top:0" width="60" height="60" viewBox="0 0 60 60"><path d="M38 22 H40.500 Q42 22 42 23.500 V40 Q42 41.500 40.500 41.500 H38 Z" fill="#4c5cf0"/><path d="M18.500 19.500 Q18.500 17 21 17 H34 L39.500 22 V39 Q39.500 41.500 37 41.500 H21 Q18.500 41.500 18.500 39 Z" fill="#4c5cf0"/><path d="M22.500 25.500 H29 M22.500 30.500 H35 M22.500 35.500 H35" stroke="#fff" stroke-width="1.800"/><path d="M39.800 23 V41" stroke="#eeeffc" stroke-width="0.800"/></svg></div>
<svg style="left:387px;top:639.21px" width="84.3" height="24.64"><text class="g" x="0" y="18.48" font-size="17.6" fill="rgb(119, 119, 119)">新项目(个)</text></svg>
<svg style="left:387px;top:664.69px" width="16.43" height="36.4"><text class="g" x="0" y="27.3" font-size="26" fill="rgb(17, 17, 17)">4</text></svg>
<div class="sb" style="left:590px;top:638px"><svg style="left:0;top:0" width="60" height="60" viewBox="0 0 60 60"><rect x="19.500" y="17" width="22" height="25" rx="3" fill="#4c5cf0"/><path d="M17.500 23.500 H22 M17.500 29.500 H22 M17.500 35.500 H22" stroke="#eeeffc" stroke-width="1.600"/><path d="M27.500 22.500 L31.500 27.500 L35.500 22.500 M31.500 27.500 V35 M28 28.500 H35 M28 31.500 H35" fill="none" stroke="#fff" stroke-width="1.800"/></svg></div>
<svg style="left:661px;top:639.21px" width="37.2" height="24.64"><text class="g" x="0" y="18.48" font-size="17.6" fill="rgb(119, 119, 119)">金额</text></svg>
<svg style="left:661px;top:664.69px" width="166.18" height="36.4"><text class="g" x="0" y="27.3" font-size="26" letter-spacing="-0.15" fill="rgb(17, 17, 17)">12,000,000.00</text></svg>
<div class="sb" style="left:862.5px;top:638px"><svg style="left:0;top:0" width="60" height="60" viewBox="0 0 60 60"><rect x="17.500" y="17" width="21.500" height="25" rx="3" fill="#4c5cf0"/><path d="M21 22.500 H23.500 M26 22.500 H34 M21 27.500 H23.500 M26 27.500 H30 M21 32.500 H23.500 M26 32.500 H28" stroke="#fff" stroke-width="1.600"/><circle cx="35" cy="35.500" r="7.600" fill="#eeeffc"/><circle cx="35" cy="35.500" r="6" fill="#4c5cf0"/><path d="M32 35.500 L34.300 37.800 L38.300 33.300" fill="none" stroke="#fff" stroke-width="1.600"/></svg></div>
<svg style="left:934px;top:639.21px" width="119.5" height="24.64"><text class="g" x="0" y="18.48" font-size="17.6" fill="rgb(119, 119, 119)">已完结项目(个)</text></svg>
<svg style="left:934px;top:664.69px" width="16.43" height="36.4"><text class="g" x="0" y="27.3" font-size="26" fill="rgb(17, 17, 17)">0</text></svg>
<div class="sb" style="left:1136px;top:638px"><svg style="left:0;top:0" width="60" height="60" viewBox="0 0 60 60"><rect x="17.500" y="17" width="21.500" height="25" rx="3" fill="#4c5cf0"/><rect x="21.300" y="21.800" width="14" height="3.800" rx="1.200" fill="none" stroke="#fff" stroke-width="1.500"/><rect x="21.300" y="30" width="5.500" height="3.200" rx=".8" fill="none" stroke="#fff" stroke-width="1.400"/><circle cx="36" cy="36" r="7.200" fill="#eeeffc"/><circle cx="36" cy="36" r="5.700" fill="#4c5cf0"/><path d="M36 32.800 V36.300 H38.800" fill="none" stroke="#fff" stroke-width="1.500"/></svg></div>
<svg style="left:1208px;top:639.21px" width="119.5" height="24.64"><text class="g" x="0" y="18.48" font-size="17.6" fill="rgb(119, 119, 119)">执行中项目(个)</text></svg>
<svg style="left:1208px;top:664.69px" width="16.43" height="36.4"><text class="g" x="0" y="27.3" font-size="26" fill="rgb(17, 17, 17)">5</text></svg>
<div class="card" style="left:283px;top:763px;width:1144px;height:300px"></div>
<svg style="left:315px;top:783px" width="82" height="28"><text class="g" x="0" y="21" font-size="20" fill="rgb(17, 17, 17)">合同简报</text></svg>
<svg style="left:1310px;top:786.25px" width="48.65" height="21"><text class="g" x="0" y="15.75" font-size="15" fill="rgb(34, 34, 34)">近90天</text></svg>
<svg style="left:1364px;top:793px" width="13" height="8" viewBox="0 0 13 8"><path d="M1 1 L6.500 6.500 L12 1" fill="none" stroke="#222" stroke-width="1.500"/></svg>
<div class="sb" style="left:315px;top:837.5px"><svg style="left:0;top:0" width="60" height="60" viewBox="0 0 60 60"><rect x="19" y="19.500" width="22" height="23" rx="4" fill="#4c5cf0"/><path d="M25 16.500 V22 M35 16.500 V22" stroke="#4c5cf0" stroke-width="2.400" stroke-linecap="round"/><path d="M26.800 18 V22 M33.200 18 V22" stroke="#eeeffc" stroke-width="1"/><path d="M23.500 27.500 H36.500 M23.500 32 H36.500 M23.500 36.500 H30" stroke="#fff" stroke-width="1.800"/></svg></div>
<svg style="left:387px;top:838.21px" width="84.3" height="24.64"><text class="g" x="0" y="18.48" font-size="17.6" fill="rgb(119, 119, 119)">新合同(个)</text></svg>
<svg style="left:387px;top:863.69px" width="16.43" height="36.4"><text class="g" x="0" y="27.3" font-size="26" fill="rgb(17, 17, 17)">3</text></svg>
<div class="sb" style="left:590px;top:837.5px"><svg style="left:0;top:0" width="60" height="60" viewBox="0 0 60 60"><path d="M19.500 19.500 Q19.500 17 22 17 H38.500 Q41 17 41 19.500 V34 L34 42 H22 Q19.500 42 19.500 39.500 Z" fill="#4c5cf0"/><path d="M34.500 42 V36.500 Q34.500 35 36 35 H41 Z" fill="#eeeffc"/><path d="M26.500 21.500 L30.500 26.500 L34.500 21.500 M30.500 26.500 V34.500 M27 27.500 H34 M27 30.500 H34 M27 37.500 H32" fill="none" stroke="#fff" stroke-width="1.800"/></svg></div>
<svg style="left:661px;top:838.21px" width="37.2" height="24.64"><text class="g" x="0" y="18.48" font-size="17.6" fill="rgb(119, 119, 119)">金额</text></svg>
<svg style="left:661px;top:863.69px" width="166.18" height="36.4"><text class="g" x="0" y="27.3" font-size="26" letter-spacing="-0.15" fill="rgb(17, 17, 17)">28,300,000.00</text></svg>
<div class="sb" style="left:862.5px;top:837.5px"><svg style="left:0;top:0" width="60" height="60" viewBox="0 0 60 60"><rect x="18.500" y="17" width="23.500" height="25" rx="3.500" fill="#4c5cf0"/><path d="M20.500 22.500 H40" stroke="#fff" stroke-width="1.600"/><path d="M24.500 30.500 L28.500 34.500 L36 27" fill="none" stroke="#fff" stroke-width="2.200"/></svg></div>
<svg style="left:934px;top:838.21px" width="119.5" height="24.64"><text class="g" x="0" y="18.48" font-size="17.6" fill="rgb(119, 119, 119)">已完成合同(个)</text></svg>
<svg style="left:934px;top:863.69px" width="16.43" height="36.4"><text class="g" x="0" y="27.3" font-size="26" fill="rgb(17, 17, 17)">0</text></svg>
<div class="sb" style="left:1136px;top:837.5px"><svg style="left:0;top:0" width="60" height="60" viewBox="0 0 60 60"><rect x="17.500" y="17" width="21.500" height="25" rx="3" fill="#4c5cf0"/><path d="M20 22 H36.500" stroke="#fff" stroke-width="2.400"/><path d="M21 28.500 H22.500 M25 28.500 H32 M21 33.500 H22.500 M25 33.500 H28" stroke="#fff" stroke-width="1.500"/><circle cx="36" cy="36" r="7.200" fill="#eeeffc"/><circle cx="36" cy="36" r="5.700" fill="#4c5cf0"/><path d="M36 32.800 V36.300 H38.800" fill="none" stroke="#fff" stroke-width="1.500"/></svg></div>
<svg style="left:1208px;top:838.21px" width="172.3" height="24.64"><text class="g" x="0" y="18.48" font-size="17.6" fill="rgb(119, 119, 119)">执行中的收入合同(个)</text></svg>
<svg style="left:1208px;top:863.69px" width="16.43" height="36.4"><text class="g" x="0" y="27.3" font-size="26" fill="rgb(17, 17, 17)">3</text></svg>
<div class="a" style="left:318px;top:930px;width:200px;height:120px;border-radius:12px;background:#f8f8fd"></div>
<svg style="left:341px;top:951.6px" width="90" height="24.64"><text class="g" x="0" y="18.48" font-size="17.6" fill="rgb(119, 119, 119)">收入确认单</text></svg>
<svg style="left:341px;top:977.3px" width="151.9" height="36.4"><text class="g" x="0" y="27.3" font-size="26" letter-spacing="-0.15" fill="rgb(17, 17, 17)">6,100,000.00</text></svg>
<div class="a" style="left:537px;top:930px;width:200px;height:120px;border-radius:12px;background:#f8f8fd"></div>
<svg style="left:560px;top:951.6px" width="54.8" height="24.64"><text class="g" x="0" y="18.48" font-size="17.6" fill="rgb(119, 119, 119)">收款单</text></svg>
<svg style="left:560px;top:977.3px" width="151.9" height="36.4"><text class="g" x="0" y="27.3" font-size="26" letter-spacing="-0.15" fill="rgb(17, 17, 17)">3,280,000.00</text></svg>
<div class="a" style="left:756px;top:930px;width:200px;height:120px;border-radius:12px;background:#f8f8fd"></div>
<svg style="left:779px;top:951.6px" width="72.4" height="24.64"><text class="g" x="0" y="18.48" font-size="17.6" fill="rgb(119, 119, 119)">简单开票</text></svg>
<svg style="left:779px;top:977.3px" width="16.43" height="36.4"><text class="g" x="0" y="27.3" font-size="26" fill="rgb(17, 17, 17)">0</text></svg>
<div class="a" style="left:975px;top:930px;width:200px;height:120px;border-radius:12px;background:#f8f8fd"></div>
<svg style="left:998px;top:951.6px" width="72.4" height="24.64"><text class="g" x="0" y="18.48" font-size="17.6" fill="rgb(119, 119, 119)">销售发票</text></svg>
<svg style="left:998px;top:977.3px" width="130.55" height="36.4"><text class="g" x="0" y="27.3" font-size="26" letter-spacing="-0.15" fill="rgb(17, 17, 17)">100,000.00</text></svg>
<div class="a" style="left:1194px;top:930px;width:200px;height:120px;border-radius:12px;background:#f8f8fd"></div>
<svg style="left:1217px;top:951.6px" width="107.6" height="24.64"><text class="g" x="0" y="18.48" font-size="17.6" fill="rgb(119, 119, 119)">已下销售订单</text></svg>
<svg style="left:1217px;top:977.3px" width="52.07" height="36.4"><text class="g" x="0" y="27.3" font-size="26" letter-spacing="-0.15" fill="rgb(17, 17, 17)">0.00</text></svg>
<div class="card" style="left:1452px;top:564px;width:486px;height:411px"></div>
<svg style="left:1484px;top:584px" width="82" height="28"><text class="g" x="0" y="21" font-size="20" fill="rgb(17, 17, 17)">帮助中心</text></svg>
<div class="a" id="banner" style="left:1477px;top:638px;width:437px;height:124.5px;border-radius:9px;background:linear-gradient(90deg,#4f5df4 0%,#5877f6 55%,#5b8ff8 100%);overflow:hidden"><div class="a" style="left:340px;top:-110px;width:220px;height:220px;border-radius:110px;background:rgba(255,255,255,.10)"></div><div class="a" style="left:398px;top:20px;width:150px;height:150px;border-radius:75px;background:rgba(255,255,255,.18)"></div></div>
<svg style="left:1502px;top:668px" width="32" height="24" viewBox="0 0 32 24"><path d="M0 2 Q0 1 1 1 H22 Q23 1 23 2 V8 L32 2.5 V21.500 L23 16 V22 Q23 23 22 23 H1 Q0 23 0 22 Z" fill="#fff"/><path d="M8 6 L17 12 L8 18 Z" fill="#5468f5"/></svg>
<svg style="left:1549px;top:667.83px" width="254.36" height="28.14"><text class="g b" x="0" y="21.11" font-size="20.1" fill="rgb(255, 255, 255)">4步轻松掌握产品，快速入门</text></svg>
<svg style="left:1549.5px;top:718px" width="15" height="15" viewBox="0 0 15 15"><circle cx="7.500" cy="7.500" r="6.500" fill="none" stroke="#fff" stroke-width="1.400"/><path d="M4.300 7.600 L6.800 10 L10.900 5.300" fill="none" stroke="#fff" stroke-width="1.400"/></svg>
<svg style="left:1569.5px;top:714.9px" width="108.4" height="21.28"><text class="g b" x="0" y="15.96" font-size="15.2" fill="rgb(255, 255, 255)">新手体系化学习</text></svg>
<svg style="left:1697.5px;top:718px" width="15" height="15" viewBox="0 0 15 15"><circle cx="7.500" cy="7.500" r="6.500" fill="none" stroke="#fff" stroke-width="1.400"/><path d="M4.300 7.600 L6.800 10 L10.900 5.300" fill="none" stroke="#fff" stroke-width="1.400"/></svg>
<svg style="left:1718px;top:714.9px" width="78" height="21.28"><text class="g b" x="0" y="15.96" font-size="15.2" fill="rgb(255, 255, 255)">针对性学习</text></svg>
<svg style="left:1509px;top:789.12px" width="72.8" height="24.78"><text class="g" x="0" y="18.59" font-size="17.7" fill="rgb(85, 85, 85)">新手入门</text></svg>
<svg style="left:1899px;top:792px" width="10" height="18" viewBox="0 0 10 18"><path d="M1 1 L9 9 L1 17" fill="none" stroke="#555" stroke-width="1.600"/></svg>
<svg style="left:1509px;top:836.12px" width="72.8" height="24.78"><text class="g" x="0" y="18.59" font-size="17.7" fill="rgb(85, 85, 85)">视频学习</text></svg>
<svg style="left:1899px;top:839px" width="10" height="18" viewBox="0 0 10 18"><path d="M1 1 L9 9 L1 17" fill="none" stroke="#555" stroke-width="1.600"/></svg>
<svg style="left:1509px;top:882.12px" width="72.8" height="24.78"><text class="g" x="0" y="18.59" font-size="17.7" fill="rgb(85, 85, 85)">帮助文档</text></svg>
<svg style="left:1899px;top:885px" width="10" height="18" viewBox="0 0 10 18"><path d="M1 1 L9 9 L1 17" fill="none" stroke="#555" stroke-width="1.600"/></svg>
<svg style="left:1509px;top:928.62px" width="72.8" height="24.78"><text class="g" x="0" y="18.59" font-size="17.7" fill="rgb(85, 85, 85)">在线客服</text></svg>
<svg style="left:1899px;top:931.5px" width="10" height="18" viewBox="0 0 10 18"><path d="M1 1 L9 9 L1 17" fill="none" stroke="#555" stroke-width="1.600"/></svg>
<svg style="left:1477px;top:793px" width="17" height="17" viewBox="0 0 17 17"><rect x="1" y="1" width="15" height="15" rx="2" fill="none" stroke="#5b62d8" stroke-width="1.500"/><path d="M1 12.500 H16" stroke="#5b62d8" stroke-width="1.500"/><path d="M5.500 1.500 V8 L8 6 L10.500 8 V1.500" fill="none" stroke="#5b62d8" stroke-width="1.300"/></svg>
<svg style="left:1478px;top:839px" width="18" height="18" viewBox="0 0 18 18"><circle cx="9" cy="9" r="7.800" fill="none" stroke="#5b62d8" stroke-width="1.500"/><path d="M7 5.500 L12.500 9 L7 12.500 Z" fill="#5b62d8"/></svg>
<svg style="left:1477px;top:885px" width="18" height="18" viewBox="0 0 18 18"><rect x="1" y="4.500" width="11.500" height="12.500" rx="2" fill="none" stroke="#5b62d8" stroke-width="1.500"/><path d="M4.500 1.500 H14 Q16.500 1.500 16.500 4 V13" fill="none" stroke="#5b62d8" stroke-width="1.500"/><path d="M4 9 H9.500 M4 12.500 H9.500" stroke="#5b62d8" stroke-width="1.400"/></svg>
<svg style="left:1477px;top:931px" width="18" height="18" viewBox="0 0 18 18"><path d="M3.500 9.500 V7 A5.500 5.500 0 0 1 14.500 7 V9.500" fill="none" stroke="#5b62d8" stroke-width="1.400"/><rect x="1.200" y="7.500" width="3" height="5" rx="1.500" fill="none" stroke="#5b62d8" stroke-width="1.300"/><rect x="13.800" y="7.500" width="3" height="5" rx="1.500" fill="none" stroke="#5b62d8" stroke-width="1.300"/><path d="M15 12.500 Q15 15.500 11 15.500" fill="none" stroke="#5b62d8" stroke-width="1.300"/><circle cx="9.500" cy="15.500" r="1.400" fill="none" stroke="#5b62d8" stroke-width="1.200"/></svg>
<div class="card" style="left:1452px;top:995px;width:486px;height:100px"></div>
<div class="a" style="left:1963px;top:249.5px;width:51px;height:53.5px;border-radius:10px;background:#fbfbfd"></div>
<svg style="left:1973px;top:255.46px" width="31.4" height="20.58"><text class="g b" x="0" y="15.44" font-size="14.7" fill="rgb(79, 91, 216)">首页</text></svg>
<svg style="left:1973px;top:276.96px" width="31.4" height="20.58"><text class="g b" x="0" y="15.44" font-size="14.7" fill="rgb(79, 91, 216)">设置</text></svg>
<div class="a" style="left:1963px;top:318px;width:51px;height:56px;border-radius:10px;background:#fbfbfd"></div>
<svg style="left:1973px;top:324.96px" width="31.4" height="20.58"><text class="g b" x="0" y="15.44" font-size="14.7" fill="rgb(51, 51, 51)">行业</text></svg>
<svg style="left:1973px;top:347.46px" width="31.4" height="20.58"><text class="g b" x="0" y="15.44" font-size="14.7" fill="rgb(51, 51, 51)">配置</text></svg>
<div class="a" style="left:1963px;top:389px;width:51px;height:55px;border-radius:10px;background:#fbfbfd"></div>
<svg style="left:1973px;top:395.46px" width="31.4" height="20.58"><text class="g b" x="0" y="15.44" font-size="14.7" fill="rgb(51, 51, 51)">新手</text></svg>
<svg style="left:1973px;top:417.46px" width="31.4" height="20.58"><text class="g b" x="0" y="15.44" font-size="14.7" fill="rgb(51, 51, 51)">引导</text></svg>
<div class="a" style="left:1963px;top:459px;width:51px;height:55px;border-radius:10px;background:#fbfbfd"></div>
<svg style="left:1973px;top:464.96px" width="31.4" height="20.58"><text class="g b" x="0" y="15.44" font-size="14.7" fill="rgb(51, 51, 51)">帮助</text></svg>
<svg style="left:1973px;top:486.96px" width="31.4" height="20.58"><text class="g b" x="0" y="15.44" font-size="14.7" fill="rgb(51, 51, 51)">中心</text></svg>
<div class="a" style="left:1963px;top:532px;width:51px;height:50px;border-radius:10px;background:#fbfbfd"></div>
<svg style="left:1973px;top:536.96px" width="31.4" height="20.58"><text class="g b" x="0" y="15.44" font-size="14.7" fill="rgb(51, 51, 51)">客服</text></svg>
<svg style="left:1973px;top:558.96px" width="31.4" height="20.58"><text class="g b" x="0" y="15.44" font-size="14.7" fill="rgb(51, 51, 51)">热线</text></svg>
<div class="a" style="left:1963px;top:586px;width:51px;height:54px;border-radius:10px;background:#fbfbfd"></div>
<svg style="left:1973px;top:592.96px" width="31.4" height="20.58"><text class="g b" x="0" y="15.44" font-size="14.7" fill="rgb(51, 51, 51)">服务</text></svg>
<svg style="left:1973px;top:612.96px" width="31.4" height="20.58"><text class="g b" x="0" y="15.44" font-size="14.7" fill="rgb(51, 51, 51)">社区</text></svg>
<div class="a" style="left:1963px;top:646px;width:51px;height:54px;border-radius:10px;background:#fbfbfd"></div>
<svg style="left:1973px;top:651.96px" width="31.4" height="20.58"><text class="g b" x="0" y="15.44" font-size="14.7" fill="rgb(51, 51, 51)">桌面</text></svg>
<svg style="left:1973px;top:673.96px" width="31.4" height="20.58"><text class="g b" x="0" y="15.44" font-size="14.7" fill="rgb(51, 51, 51)">快捷</text></svg>
<div class="a" style="left:2012px;top:283px;width:28px;height:54px;overflow:hidden;z-index:5"><div class="a" style="left:3.5px;top:2px;width:50px;height:50px;border-radius:25px;background:radial-gradient(circle at 40% 35%,#ffffff 0%,#f1f5fc 50%,#c9d6ee 100%);box-shadow:0 0 4px rgba(90,110,160,.5)"></div><div class="a" style="left:14px;top:17px;width:30px;height:21px;border-radius:9px 9px 11px 11px;background:#10269a"></div><div class="a" style="left:18px;top:23px;width:5.500px;height:7px;border-radius:3px;background:#5fd0ff;box-shadow:0 0 3px 1px #2a7ff0"></div><div class="a" style="left:8px;top:15px;width:2px;height:6px;border-radius:1px;background:#3f5fd8;transform:rotate(20deg)"></div><div class="a" style="left:20px;top:5px;width:12px;height:5px;border-radius:3px;background:#3f6fe0"></div><div class="a" style="left:22px;top:45px;width:8px;height:4px;border-radius:2px;background:#6fb0f5"></div></div>
<div class="a" style="left:2021px;top:230px;width:17px;height:790px;background:#f1f1f1"></div>
<div class="a" style="left:2021px;top:247px;width:17px;height:247px;background:#c1c1c1"></div>
<svg style="left:2025px;top:236px" width="9" height="6" viewBox="0 0 9 6"><path d="M0 6 L4.500 0.500 L9 6 Z" fill="#a0a0a0"/></svg>
<svg style="left:2025px;top:1006px" width="9" height="6" viewBox="0 0 9 6"><path d="M0 0 L4.500 5.500 L9 0 Z" fill="#444"/></svg>
</div>
<svg style="left:955px;top:581px" width="14" height="22" viewBox="0 0 14 22"><path d="M1 1 V17 L4.800 13.500 L7.500 20 L10 19 L7.300 12.700 H12.500 Z" fill="#fff" stroke="#222" stroke-width="1.200" stroke-linejoin="round"/></svg>
<!-- taskbar -->
<div class="a" id="task"></div>

<!-- taskbar icons -->
<svg style="left:146px;top:1036px" width="29" height="29" viewBox="0 0 29 29"><defs><linearGradient id="wg" x1="0" y1="0" x2="1" y2="1"><stop offset="0" stop-color="#6fd0fb"/><stop offset="1" stop-color="#1597e5"/></linearGradient></defs><rect x="0" y="0" width="13.8" height="13.8" rx="1" fill="url(#wg)"/><rect x="15.2" y="0" width="13.8" height="13.8" rx="1" fill="url(#wg)"/><rect x="0" y="15.200" width="13.800" height="13.800" rx="1" fill="url(#wg)"/><rect x="15.200" y="15.200" width="13.800" height="13.800" rx="1" fill="url(#wg)"/></svg>
<svg style="left:201px;top:1034px" width="32" height="32" viewBox="0 0 32 32"><circle cx="15" cy="14.500" r="10.500" fill="#3d4a63" stroke="#e8edf2" stroke-width="3"/><path d="M22.500 22.500 L29 29" stroke="#cfd6de" stroke-width="4" stroke-linecap="round"/></svg>
<div class="a" style="left:257px;top:1047px;width:20px;height:18px;border-radius:2px;background:#8a8f98"></div>
<div class="a" style="left:265px;top:1037px;width:22px;height:20px;border-radius:2px;background:#f2f2f2;opacity:.95"></div>
<div class="a" style="left:265px;top:1047px;width:12px;height:10px;background:#b5b8bd"></div>
<svg style="left:312px;top:1036px" width="30" height="29" viewBox="0 0 30 29"><path d="M0 3 Q0 1 2 1 H10 L13 4 H28 Q30 4 30 6 V10 H0 Z" fill="#e8a317"/><rect x="0" y="7" width="30" height="20" rx="2" fill="#ffd34f"/><rect x="0" y="7" width="30" height="9" rx="2" fill="#ffde70"/><rect x="5" y="20" width="20" height="7.500" rx="1.500" fill="#1b7fe0"/><rect x="9" y="20" width="12" height="3" fill="#4aa3f5"/></svg>
<div class="a" style="left:367px;top:1035px;width:30px;height:30px;border-radius:5px;background:#d92b26"></div>
<div class="a" style="left:367px;top:1056px;width:30px;height:9px;border-radius:0 0 5px 5px;background:#f7f2f2"></div>
<svg style="left:370px;top:1039.25px" width="27" height="12.6"><text class="g b" x="0" y="9.45" font-size="9" letter-spacing="-1" fill="rgb(255, 255, 255)">好业财</text></svg>
<div class="t" style="left:372px;top:1060.500px;font-size:6.500px;font-weight:bold;font-style:italic;color:#d92b26">Chanjet</div>
<svg style="left:422px;top:1034px" width="30" height="32" viewBox="0 0 30 32"><defs><radialGradient id="fx" cx="0.600" cy="0.250" r="0.900"><stop offset="0" stop-color="#ffe03d"/><stop offset="0.450" stop-color="#ff8a16"/><stop offset="0.850" stop-color="#ff3a5c"/><stop offset="1" stop-color="#e0208a"/></radialGradient></defs><path d="M15 3 Q18 0 21 2 Q20 5 23 7 Q29 12 28.500 19 Q27 30 15 30.500 Q2 30 1.500 18 Q1.500 11 6 7 Q6 10 8 10.500 Q10 5 15 3 Z" fill="url(#fx)"/><circle cx="14.500" cy="17.500" r="6.800" fill="#6a3fe0"/><path d="M9.500 15 Q13 11 19 12.500 Q15 14 14 17 Q17 18 19 16 Q18 22 13 21.500 Q9 20 9.500 15 Z" fill="#ff9a1f"/></svg>
<svg style="left:476px;top:1039px" width="31" height="24" viewBox="0 0 31 24"><defs><linearGradient id="wp" x1="0" y1="0" x2="1" y2="1"><stop offset="0" stop-color="#ff4a2e"/><stop offset="1" stop-color="#f0401f"/></linearGradient></defs><path d="M3 4 H13.500 M3 4 L9.500 19 L15.500 7.500 L21.500 19 L28 4 H19" fill="none" stroke="url(#wp)" stroke-width="3.500" stroke-linejoin="round" stroke-linecap="round"/></svg>
<svg style="left:531px;top:1036px" width="28" height="28" viewBox="0 0 28 28"><path d="M19.500 5.500 A10 9.500 0 1 0 6.500 20.500 L5 25.500 L11 22.800 Q16 23.500 19 21" fill="none" stroke="#2a8af2" stroke-width="3.600" stroke-linecap="round" stroke-linejoin="round"/><path d="M18 15.500 L24 11.500 M18 15.500 L24 21" stroke="#f5b400" stroke-width="1.800"/><circle cx="18" cy="15.500" r="2.400" fill="#f5a800"/><circle cx="24.500" cy="11" r="2.500" fill="#3ccf6e"/><circle cx="24.500" cy="21.500" r="2.500" fill="#ff7a2e"/></svg>
<div class="a" style="left:324px;top:1071px;width:7px;height:3px;border-radius:1.500px;background:#9aa0aa"></div>
<div class="a" style="left:489px;top:1071px;width:7px;height:3px;border-radius:1.500px;background:#9aa0aa"></div>
<div class="a" style="left:544px;top:1071px;width:7px;height:3px;border-radius:1.500px;background:#9aa0aa"></div>
<!-- tray -->
<svg style="left:1635px;top:1045px" width="16" height="10" viewBox="0 0 16 10"><path d="M1.500 8.500 L8 2 L14.500 8.500" fill="none" stroke="#fff" stroke-width="2"/></svg>
<svg style="left:1675px;top:1040px" width="16" height="21" viewBox="0 0 16 21"><rect x="4.500" y="1" width="7" height="12" rx="3.500" fill="none" stroke="#aeb6c2" stroke-width="1.700"/><path d="M1.500 9.500 Q1.500 16 8 16 Q14.500 16 14.500 9.500 M8 16 V20" fill="none" stroke="#aeb6c2" stroke-width="1.700"/></svg>
<svg style="left:1714px;top:1037.63px" width="18.5" height="23.1"><text class="g b" x="0" y="17.32" font-size="16.5" fill="rgb(255, 255, 255)">中</text></svg>
<div class="a" style="left:1761px;top:1041px;width:19px;height:18px;border-radius:3px;background:#ee4d1c;transform:rotate(-10deg)"></div>
<div class="t" style="left:1764px;top:1050px;font-size:19px;font-weight:bold;font-style:italic;color:#fff">S</div>
<svg style="left:1807px;top:1041px" width="22" height="17" viewBox="0 0 22 17"><path d="M1 6 Q11 -3 21 6" fill="none" stroke="#fff" stroke-width="1.800"/><path d="M4.500 9.500 Q11 3.500 17.500 9.500" fill="none" stroke="#fff" stroke-width="1.800"/><path d="M8 13 Q11 10.200 14 13" fill="none" stroke="#fff" stroke-width="1.800"/><circle cx="11" cy="15.300" r="1.400" fill="#fff"/></svg>
<svg style="left:1837px;top:1039px" width="22" height="20" viewBox="0 0 22 20"><path d="M1 7 H4.500 L9 2.500 V17.500 L4.500 13 H1 Z" fill="none" stroke="#fff" stroke-width="1.500" stroke-linejoin="round"/><path d="M12 7 Q14 10 12 13 M15 4.500 Q19 10 15 15.500 M18 2 Q23.500 10 18 18" fill="none" stroke="#fff" stroke-width="1.500"/></svg>
<svg style="left:1866px;top:1040px" width="23" height="18" viewBox="0 0 23 18"><rect x="2.500" y="6" width="16.500" height="10.500" rx="2.200" fill="#6f7b8f" stroke="#fff" stroke-width="1.600"/><rect x="4.500" y="8" width="12.500" height="6.500" rx="1" fill="#dfe4ea"/><rect x="19.800" y="9" width="2.200" height="4.500" rx="1" fill="#fff"/><path d="M6.500 .8 L2.500 7.500 H5.500 L4.300 11.500" fill="none" stroke="#fff" stroke-width="1.500" stroke-linejoin="round"/></svg>
<svg style="left:1949.53px;top:1029.46px" width="38.47" height="20.44"><text class="g" x="0" y="15.33" font-size="14.6" fill="rgb(255, 255, 255)">16:00</text></svg>
<svg style="left:1907.45px;top:1049.23px" width="80.55" height="21.42"><text class="g" x="0" y="16.07" font-size="15.3" fill="rgb(255, 255, 255)">2024-11-05</text></svg>
<svg style="left:1995px;top:1040px" width="21" height="22" viewBox="0 0 21 22"><path d="M1.500 17 Q4 13.500 4 9.500 Q4 3 10 3 Q16 3 16 9.500 Q16 13.500 18.500 17 Z" fill="#e9ecf1"/><path d="M7.500 18.500 Q10 22 12.500 18.500 Z" fill="#e9ecf1"/><path d="M6.500 8 H11 L6.500 13.500 H11.500" fill="none" stroke="#19263f" stroke-width="1.700"/><path d="M13.500 1.500 H18.500 L13.500 7 H19" fill="none" stroke="#fff" stroke-width="1.800" stroke-linejoin="round"/></svg>
<!-- subtitle -->
<div class="a" id="sub"></div>
<svg style="left:585.5px;top:1018.51px" width="990" height="53.2"><text class="g" x="0" y="39.9" font-size="38" fill="rgb(255, 255, 255)">由于参与者时间紧张，团队将尽量在半小时左右结束会议。</text></svg>
<!-- share label -->
<div class="a" style="left:128px;top:1061px;width:146px;height:15px;background:rgba(10,12,20,.72)"></div>
<svg style="left:129px;top:1059.33px" width="147.2" height="16.94"><text class="g" x="0" y="12.71" font-size="12.1" fill="rgb(255, 255, 255)">咨询顾问李开振的共享屏幕</text></svg>
</body>
</html>
